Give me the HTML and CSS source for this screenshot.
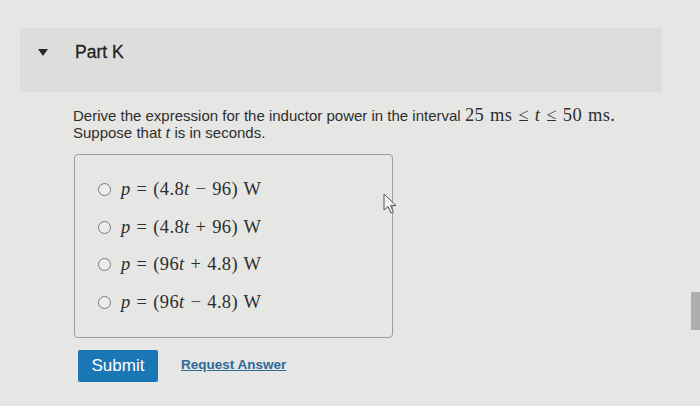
FILE: index.html
```html
<!DOCTYPE html>
<html>
<head>
<meta charset="utf-8">
<link rel="stylesheet" href="styles.css">
</head>
<body>
<div class="page">
  <div class="header">
    <span class="caret"></span>
    <span class="title">Part K</span>
  </div>
  <div class="content">
    <p class="question">Derive the expression for the inductor power in the interval <span class="m">25&nbsp;<span class="rm">ms</span> ≤ <i>t</i> ≤ 50&nbsp;<span class="rm">ms</span>.</span><br>Suppose that <i class="mi">t</i> is in seconds.</p>
    <div class="choices">
      <label class="choice"><span class="radio"></span><span class="m"><i>p</i> = (4.8<i>t</i> − 96) W</span></label>
      <label class="choice"><span class="radio"></span><span class="m"><i>p</i> = (4.8<i>t</i> + 96) W</span></label>
      <label class="choice"><span class="radio"></span><span class="m"><i>p</i> = (96<i>t</i> + 4.8) W</span></label>
      <label class="choice"><span class="radio"></span><span class="m"><i>p</i> = (96<i>t</i> − 4.8) W</span></label>
    </div>
    <div class="actions">
      <button class="submit">Submit</button>
      <a class="request" href="#">Request Answer</a>
    </div>
  </div>
</div>
<svg class="cursor" width="18" height="24" viewBox="0 0 18 24"><path d="M1 1 L1 17 L5 13.5 L8 20 L10.5 19 L7.6 12.6 L13 12.6 Z" fill="#f2f2f2" stroke="#555" stroke-width="1"/></svg>
<div class="thumb"></div>
</body>
</html>
```
FILE: styles.css
```css
html, body { margin: 0; padding: 0; }
body {
  background: #e6e6e4;
  width: 700px;
  height: 406px;
  overflow: hidden;
  position: relative;
  font-family: "Liberation Sans", Arial, sans-serif;
  color: #2e2e2e;
}
.page { padding: 28px 38px 0 20px; }
.header {
  height: 64px;
  box-sizing: border-box;
  background: #dddddb;
  display: flex;
  align-items: flex-start;
  padding: 14px 0 0 18px;
}
.caret {
  width: 0; height: 0;
  border-left: 5px solid transparent;
  border-right: 5px solid transparent;
  border-top: 7px solid #2a2a2a;
  margin-top: 7px;
}
.title { margin-left: 27px; font-size: 17.5px; line-height: 20px; color: #222; -webkit-text-stroke: 0.3px #222; }
.content { padding-left: 53px; }
.question {
  margin: 15px 0 0 0;
  font-size: 15px;
  line-height: 17px;
  color: #2e2e2e;
}
.m { font-family: "Liberation Serif", "Times New Roman", serif; font-size: 18.5px; letter-spacing: 0.35px; word-spacing: 1px; }
.question .m { font-size: 18.5px; }
.rm { font-style: normal; }
.mi { font-family: "Liberation Serif", serif; font-size: 17px; }
.choices {
  margin-top: 13px;
  border: 1px solid #9c9c9a;
  border-radius: 4px;
  padding: 24px 0 0 23px;
  box-sizing: border-box;
  width: 319px;
  height: 184px;
  margin-left: 1px;
  display: flex;
  flex-direction: column;
  gap: 16.5px;
}
.choice { display: flex; align-items: center; height: 21px; color: #2e2e2e; }
.radio {
  width: 11px; height: 11px;
  border: 1.6px solid #7a7a7a;
  border-radius: 50%;
  margin-right: 10px;
  background: #ececea;
}
.actions { display: flex; align-items: center; margin-top: 12px; padding-left: 5px; }
.submit {
  width: 80px; height: 32px;
  background: #1b76b5;
  color: #fff;
  border: none;
  border-radius: 2px;
  font-family: "Liberation Sans", Arial, sans-serif;
  font-size: 17px;
}
.request {
  margin-left: 23px;
  margin-top: -3px;
  color: #2c6a9b;
  font-weight: bold;
  font-size: 13.5px;
  text-decoration: underline;
}
.cursor { position: absolute; left: 383px; top: 193px; }
.thumb { position: absolute; left: 691px; top: 292px; width: 9px; height: 38px; background: #aeaeac; }
```
